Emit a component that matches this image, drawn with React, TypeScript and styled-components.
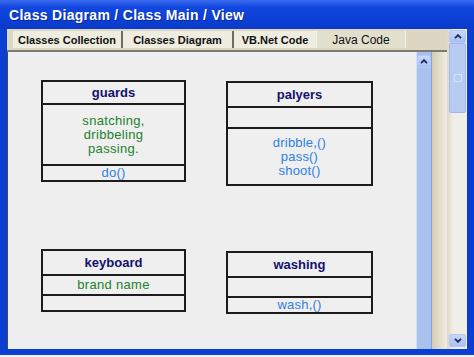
import styled, { createGlobalStyle } from "styled-components";

const GlobalStyle = createGlobalStyle`
    body {
        margin: 0;
        background: #f2f2f2;
        font-family: "Liberation Sans", Arial, sans-serif;
    }
`;

const Window = styled.div`
    width: 474px;
    height: 355px;
    box-sizing: border-box;
    background: #0b3fd4;
    padding: 0 7px 6px 7px;
    display: flex;
    flex-direction: column;
`;

const TitleBar = styled.div`
    height: 29px;
    margin: 0 -7px;
    padding-left: 9px;
    display: flex;
    align-items: center;
    background: linear-gradient(to bottom, #3a6cf0 0%, #1248e0 25%, #0b3fd4 70%, #0a3ac8 100%);
    color: #ffffff;
    font-family: "Liberation Sans", Arial, sans-serif;
    font-weight: bold;
    font-size: 14px;
    letter-spacing: 0.3px;
    text-shadow: 1px 1px 0 #0a2a90;
`;

const Client = styled.div`
    flex: 1;
    display: flex;
    min-height: 0;
`;

const Main = styled.div`
    width: 440px;
    display: flex;
    flex-direction: column;
`;

const TabStrip = styled.div`
    height: 23px;
    box-sizing: border-box;
    padding-left: 6px;
    background: #dcd7c3;
    border-bottom: 2px solid #7c7a72;
    display: flex;
    align-items: flex-start;
`;

const Tab = styled.div<{ $w: number; $light?: boolean; $sep?: boolean }>`
    width: ${({ $w }) => $w}px;
    height: 17px;
    margin-top: 2px;
    box-sizing: border-box;
    display: flex;
    align-items: center;
    justify-content: center;
    background: ${({ $light }) => ($light ? "#efece0" : "#e3dfcd")};
    border-right: ${({ $sep }) => ($sep ? "2px solid #6e6c64" : "1px solid #f4f2ea")};
    font-family: "Liberation Sans", Arial, sans-serif;
    font-size: ${({ $light }) => ($light ? "11px" : "12px")};
    font-weight: ${({ $light }) => ($light ? "bold" : "normal")};
    color: #111111;
    white-space: nowrap;
`;

const ContentRow = styled.div`
    flex: 1;
    display: flex;
    min-height: 0;
`;

const Canvas = styled.div`
    position: relative;
    width: 409px;
    box-sizing: border-box;
    background: #eeeeee;
    border-left: 1px solid #4a4a50;
`;

const InnerScroll = styled.div`
    width: 16px;
    box-sizing: border-box;
    background: #a9c1ef;
    border-left: 1px solid #d4e0f8;
    border-right: 1px solid #86a2de;
    padding-top: 3px;
`;

const Gutter = styled.div`
    width: 15px;
    background: linear-gradient(to right, #d4ccb0, #e6e1cf 60%, #efece2);
`;

const OuterScroll = styled.div`
    width: 20px;
    box-sizing: border-box;
    padding: 1px 1px 2px 2px;
    background: linear-gradient(to right, #ddd7c2, #f0eee6 30%);
    display: flex;
    flex-direction: column;
`;

const ArrowButton = styled.div`
    height: 11px;
    flex-shrink: 0;
    display: flex;
    align-items: center;
    justify-content: center;
    background: linear-gradient(to bottom, #c8d8fa, #a8c0f0);
    border: 1px solid #b4c8f4;
    border-radius: 2px;
`;

const Thumb = styled.div`
    height: 70px;
    box-sizing: border-box;
    background: #b8ccf3;
    border: 1px solid #a2b8ea;
    border-radius: 2px;
    display: flex;
    align-items: center;
    justify-content: center;
`;

const Grip = styled.div`
    width: 6px;
    height: 6px;
    border: 1px solid #d6e2fa;
`;

const Track = styled.div`
    flex: 1;
`;

const ClassBox = styled.div<{ $x: number; $y: number; $w: number }>`
    position: absolute;
    left: ${({ $x }) => $x}px;
    top: ${({ $y }) => $y}px;
    width: ${({ $w }) => $w}px;
    box-sizing: border-box;
    border: 2px solid #1c1c1c;
    background: #efefef;
    display: flex;
    flex-direction: column;
`;

const Section = styled.div<{ $h: number; $first?: boolean }>`
    height: ${({ $h }) => $h}px;
    box-sizing: border-box;
    border-top: ${({ $first }) => ($first ? "none" : "2px solid #1c1c1c")};
    display: flex;
    flex-direction: column;
    align-items: center;
    justify-content: center;
    font-family: "Liberation Sans", Arial, sans-serif;
    font-size: 13px;
    line-height: 14px;
`;

const ClassName = styled.span`
    font-weight: bold;
    font-size: 13px;
    color: #12126e;
`;

const Attr = styled.span`
    color: #23812b;
    letter-spacing: 0.3px;
`;

const Method = styled.span`
    color: #2e7fe2;
    letter-spacing: 0.2px;
`;

const Chevron = ({ up }: { up?: boolean }) => (
    <svg width="8" height="5" viewBox="0 0 8 5">
        <path
            d={up ? "M1 4.2 L4 1.2 L7 4.2" : "M1 0.8 L4 3.8 L7 0.8"}
            fill="none"
            stroke="#1a2466"
            strokeWidth="1.8"
        />
    </svg>
);

type UmlClass = {
    name: string;
    x: number;
    y: number;
    w: number;
    heights: [number, number, number];
    attrs: string[];
    methods: string[];
};

const classes: UmlClass[] = [
    {
        name: "guards",
        x: 33,
        y: 28,
        w: 145,
        heights: [21, 61, 16],
        attrs: ["snatching,", "dribbeling", "passing."],
        methods: ["do()"],
    },
    {
        name: "palyers",
        x: 218,
        y: 29,
        w: 147,
        heights: [23, 21, 57],
        attrs: [],
        methods: ["dribble,()", "pass()", "shoot()"],
    },
    {
        name: "keyboard",
        x: 33,
        y: 197,
        w: 145,
        heights: [23, 20, 16],
        attrs: ["brand name"],
        methods: [],
    },
    {
        name: "washing",
        x: 218,
        y: 199,
        w: 147,
        heights: [23, 20, 16],
        attrs: [],
        methods: ["wash,()"],
    },
];

const tabs = [
    { label: "Classes Collection", w: 110, light: true, sep: true },
    { label: "Classes Diagram", w: 111, light: true, sep: true },
    { label: "VB.Net Code", w: 83, light: true, sep: false },
    { label: "Java Code", w: 89, light: false, sep: false },
];

export default function App() {
    return (
        <>
            <GlobalStyle />
            <Window>
                <TitleBar>Class Diagram / Class Main / View</TitleBar>
                <Client>
                    <Main>
                        <TabStrip>
                            {tabs.map((t) => (
                                <Tab key={t.label} $w={t.w} $light={t.light} $sep={t.sep}>
                                    {t.label}
                                </Tab>
                            ))}
                        </TabStrip>
                        <ContentRow>
                            <Canvas>
                                {classes.map((c) => (
                                    <ClassBox key={c.name} $x={c.x} $y={c.y} $w={c.w}>
                                        <Section $h={c.heights[0]} $first>
                                            <ClassName>{c.name}</ClassName>
                                        </Section>
                                        <Section $h={c.heights[1]}>
                                            {c.attrs.map((a) => (
                                                <Attr key={a}>{a}</Attr>
                                            ))}
                                        </Section>
                                        <Section $h={c.heights[2]}>
                                            {c.methods.map((m) => (
                                                <Method key={m}>{m}</Method>
                                            ))}
                                        </Section>
                                    </ClassBox>
                                ))}
                            </Canvas>
                            <InnerScroll>
                                <ArrowButton>
                                    <Chevron up />
                                </ArrowButton>
                            </InnerScroll>
                            <Gutter />
                        </ContentRow>
                    </Main>
                    <OuterScroll>
                        <ArrowButton>
                            <Chevron up />
                        </ArrowButton>
                        <Thumb>
                            <Grip />
                        </Thumb>
                        <Track />
                        <ArrowButton>
                            <Chevron />
                        </ArrowButton>
                    </OuterScroll>
                </Client>
            </Window>
        </>
    );
}
